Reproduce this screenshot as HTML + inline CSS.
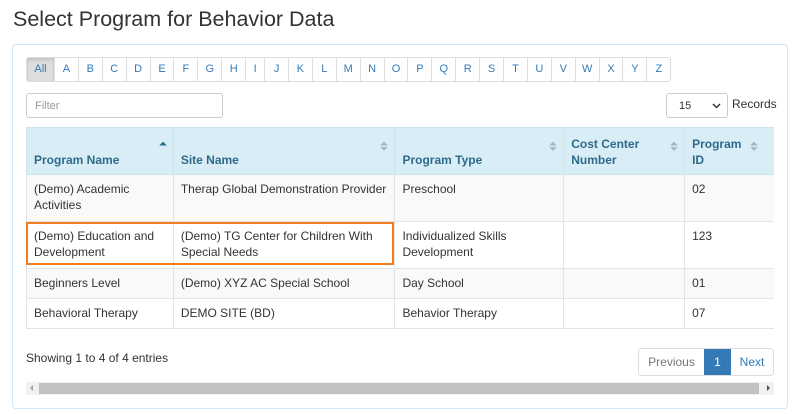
<!DOCTYPE html>
<html><head><style>
*{box-sizing:border-box;margin:0;padding:0}
body{width:800px;height:414px;background:#fff;font-family:"Liberation Sans",sans-serif;font-size:12px;color:#333;position:relative;overflow:hidden}
.abs{position:absolute}
h1{position:absolute;left:13px;top:7px;font-size:21.5px;font-weight:normal;color:#333}
.panel{left:12px;top:44px;width:776px;height:365px;border:1px solid #cfe9f5;border-radius:4px}
.letters{left:26px;top:57px;height:25px;display:flex;border:1px solid #ddd;border-radius:3px}
.letters span{height:23px;line-height:23px;padding:0;border-left:1px solid #ddd;color:#337ab7;font-size:11px;text-align:center;width:23.9px}
.letters span:first-child{border-left:none;background:#ddd;color:#337ab7;width:27px;box-shadow:inset 0 2px 3px rgba(0,0,0,.12)}
.input{border:1px solid #ccc;border-radius:3px;height:25px}
table{position:absolute;left:26px;top:127px;border-collapse:collapse;width:760px}
td,th{border:1px solid #e4e4e4;padding:6px 7px;vertical-align:top;text-align:left;line-height:16px}
th{background:#d9edf7;color:#2e6b8a;font-weight:bold;vertical-align:bottom;height:47px;position:relative;border-color:#cde3ee}
.s{position:absolute;right:6px;top:12px;width:8px;height:12px}
.clip{position:absolute;left:0;top:0;width:774px;height:414px;overflow:hidden}
tr.odd td{background:#f9f9f9}
</style></head><body>
<h1>Select Program for Behavior Data</h1>
<div class="abs panel"></div>
<div class="abs letters"><span>All</span><span>A</span><span>B</span><span>C</span><span>D</span><span>E</span><span>F</span><span>G</span><span>H</span><span style="width:19px">I</span><span>J</span><span>K</span><span>L</span><span>M</span><span>N</span><span>O</span><span>P</span><span>Q</span><span>R</span><span>S</span><span>T</span><span>U</span><span>V</span><span>W</span><span>X</span><span>Y</span><span>Z</span></div>
<div class="abs input" style="left:26px;top:93px;width:197px;color:#999;font-size:11px;padding:6px 8px">Filter</div>
<div class="abs input" style="left:666px;top:93px;width:62px;font-size:11px;padding:6px 12px">15<svg style="position:absolute;right:6px;top:9px" width="9" height="6"><path d="M1 1l3.5 3.5L8 1" stroke="#333" stroke-width="1.5" fill="none"/></svg></div>
<div class="abs" style="left:732px;top:97px;font-size:12px">Records</div>
<div class="clip">
<table>
<colgroup><col style="width:147px"><col style="width:222px"><col style="width:169px"><col style="width:121px"><col style="width:101px"></colgroup>
<tr><th>Program Name<svg class="s" viewBox="0 0 7 11"><path d="M0 5L3.5 1.5L7 5Z" fill="#2e6b8a"/></svg></th>
<th>Site Name<svg class="s" viewBox="0 0 7 11"><path d="M0 5L3.5 1.5L7 5ZM0 6.5L3.5 10L7 6.5Z" fill="#a0b8c6"/></svg></th>
<th>Program Type<svg class="s" viewBox="0 0 7 11"><path d="M0 5L3.5 1.5L7 5ZM0 6.5L3.5 10L7 6.5Z" fill="#a0b8c6"/></svg></th>
<th>Cost Center<br>Number<svg class="s" viewBox="0 0 7 11"><path d="M0 5L3.5 1.5L7 5ZM0 6.5L3.5 10L7 6.5Z" fill="#a0b8c6"/></svg></th>
<th>Program<br>ID<svg class="s" style="right:27px" viewBox="0 0 7 11"><path d="M0 5L3.5 1.5L7 5ZM0 6.5L3.5 10L7 6.5Z" fill="#a0b8c6"/></svg></th></tr>
<tr class="odd" style="height:47px"><td>(Demo) Academic<br>Activities</td><td>Therap Global Demonstration Provider</td><td>Preschool</td><td></td><td>02</td></tr>
<tr style="height:47px"><td>(Demo) Education and<br>Development</td><td>(Demo) TG Center for Children With<br>Special Needs</td><td>Individualized Skills<br>Development</td><td></td><td>123</td></tr>
<tr class="odd" style="height:30px"><td>Beginners Level</td><td>(Demo) XYZ AC Special School</td><td>Day School</td><td></td><td>01</td></tr>
<tr style="height:30px"><td>Behavioral Therapy</td><td>DEMO SITE (BD)</td><td>Behavior Therapy</td><td></td><td>07</td></tr>
</table>
</div>
<div class="abs" style="left:26px;top:222px;width:368px;height:43px;border:2px solid #f07d1f"></div>
<div class="abs" style="left:26px;top:351px">Showing 1 to 4 of 4 entries</div>
<div class="abs" style="left:638px;top:348px;width:136px;height:28px;border:1px solid #ddd;border-radius:4px;display:flex;line-height:26px">
<span style="width:65px;text-align:center;color:#777">Previous</span><span style="width:27px;background:#337ab7;color:#fff;text-align:center">1</span><span style="flex:1;text-align:center;color:#337ab7">Next</span></div>
<div class="abs" style="left:26px;top:382px;width:748px;height:13px;background:#f1f1f1"></div>
<div class="abs" style="left:39px;top:383px;width:720px;height:11px;background:#c1c1c1"></div>
<svg class="abs" style="left:29px;top:384px" width="6" height="8"><path d="M4 1L1 4L4 7Z" fill="#a3a3a3"/></svg>
<svg class="abs" style="left:765px;top:384px" width="6" height="8"><path d="M2 1L5 4L2 7Z" fill="#505050"/></svg>
</body></html>
